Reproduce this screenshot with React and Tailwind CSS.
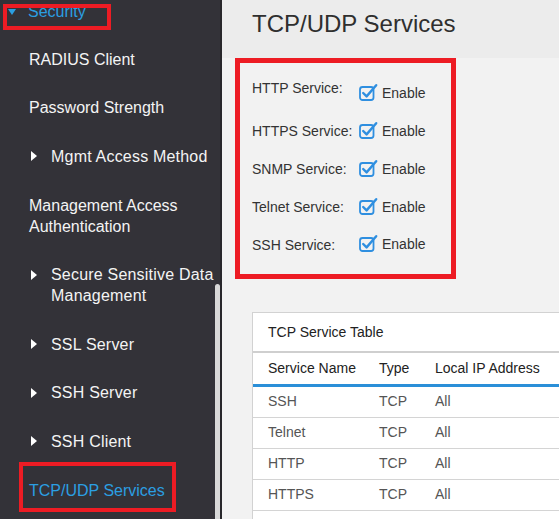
import React from 'react';

const font = { fontFamily: '"Liberation Sans", Arial, sans-serif' };

const menu = [
  { label: ['RADIUS Client'] },
  { label: ['Password Strength'] },
  { label: ['Mgmt Access Method'], arrow: true },
  { label: ['Management Access', 'Authentication'] },
  { label: ['Secure Sensitive Data', 'Management'], arrow: true },
  { label: ['SSL Server'], arrow: true },
  { label: ['SSH Server'], arrow: true },
  { label: ['SSH Client'], arrow: true },
];

const services = [
  { name: 'HTTP Service:', lift: true },
  { name: 'HTTPS Service:' },
  { name: 'SNMP Service:' },
  { name: 'Telnet Service:' },
  { name: 'SSH Service:', last: true },
];

const tcpRows = [
  ['SSH', 'TCP', 'All'],
  ['Telnet', 'TCP', 'All'],
  ['HTTP', 'TCP', 'All'],
  ['HTTPS', 'TCP', 'All'],
  ['', '', ''],
];

function CheckIcon() {
  return (
    <svg width="19" height="18" viewBox="0 0 19 18" fill="none">
      <rect x="1" y="4" width="13.5" height="13" rx="2.5" stroke="#2f8fe0" strokeWidth="1.8" />
      <path d="M4.2 10 L7.6 13.4 L17.2 2.2" stroke="#2f8fe0" strokeWidth="2.4" strokeLinecap="round" strokeLinejoin="round" />
    </svg>
  );
}

function Arrow() {
  return (
    <span className="flex h-[21px] w-[6px] shrink-0 items-center">
      <span className="h-0 w-0 border-y-[5.5px] border-l-[6px] border-y-transparent border-l-white" />
    </span>
  );
}

export default function App() {
  return (
    <div className="flex h-[519px] w-[559px] overflow-hidden" style={font}>
      {/* Sidebar */}
      <aside className="flex h-full w-[222px] shrink-0 bg-[#333238]">
        <nav className="flex-1 text-[16px] text-[#f4f4f4]">
          <div className="relative h-[35px]">
            <div className="flex h-[24px] items-center pl-[8px]">
              <span className="mr-[12px] h-0 w-0 border-x-[4.5px] border-t-[6px] border-x-transparent border-t-[#2b9fe2]" />
              <span className="text-[#2b9fe2]">Security</span>
            </div>
            <div className="absolute left-[3px] top-[4px] h-[26px] w-[108px] border-[4px] border-[#ed1c24]" />
          </div>

          {menu.map((m, i) => (
            <div key={i} className={`flex py-[13.8px] leading-[21px] ${m.arrow ? 'pl-[31px]' : 'pl-[29px]'}`}>
              {m.arrow && <Arrow />}
              <div className={m.arrow ? 'ml-[14px] tracking-[0.2px]' : ''}>
                {m.label.map(l => <div key={l}>{l}</div>)}
              </div>
            </div>
          ))}

          <div className="relative py-[13.8px] pl-[29px] leading-[21px] text-[#2b9fe2]">
            TCP/UDP Services
            <div className="absolute left-[19px] top-[-4px] h-[50px] w-[157px] border-[4px] border-[#ed1c24]" />
          </div>
        </nav>
        <div className="w-[5px]">
          <div className="mt-[284px] h-[240px] rounded-t-[3px] bg-[#d8d8d8]" />
        </div>
        <div className="w-[2px] bg-[#28272b]" />
      </aside>

      {/* Main */}
      <main className="flex-1 overflow-hidden bg-[#f2f2f2]">
        <header className="h-[58px] bg-[#ececec] pl-[30px] pt-[10px]">
          <h1 className="text-[24px] leading-[28px] text-[#2f2f2f]">TCP/UDP Services</h1>
        </header>

        <section className="ml-[13px] w-[221px] border-[5px] border-[#ed1c24] pb-[12px] pl-[12px] pt-[11px] text-[14px] text-[#333]">
          {services.map(s => (
            <div key={s.name} className={`flex items-center ${s.last ? 'h-[36px]' : 'h-[38px]'}`}>
              <span className={`w-[107px] ${s.lift ? 'mb-[10px]' : ''} ${s.last ? 'mt-[3px]' : ''}`}>{s.name}</span>
              <span className="-mt-[3px]"><CheckIcon /></span>
              <span className="ml-[4px]">Enable</span>
            </div>
          ))}
        </section>

        <div className="ml-[30px] mt-[33px] w-[420px] border border-[#d2d2d2] bg-white text-[14px]">
          <div className="flex h-[38px] items-center pl-[15px] text-[#222]">TCP Service Table</div>
          <div className="h-[2px] bg-[#cfcfcf]" />
          <div className="flex h-[31px] items-center pl-[15px] text-[#222]">
            <span className="w-[111px]">Service Name</span>
            <span className="w-[56px]">Type</span>
            <span>Local IP Address</span>
          </div>
          <div className="h-[3px] bg-[#2a8fd8]" />
          {tcpRows.map((r, i) => (
            <div key={i} className="flex h-[31px] items-center border-b border-[#d4d4d4] pl-[15px] pb-[2px] text-[#555]">
              <span className="w-[111px]">{r[0]}</span>
              <span className="w-[56px]">{r[1]}</span>
              <span>{r[2]}</span>
            </div>
          ))}
        </div>
      </main>
    </div>
  );
}
